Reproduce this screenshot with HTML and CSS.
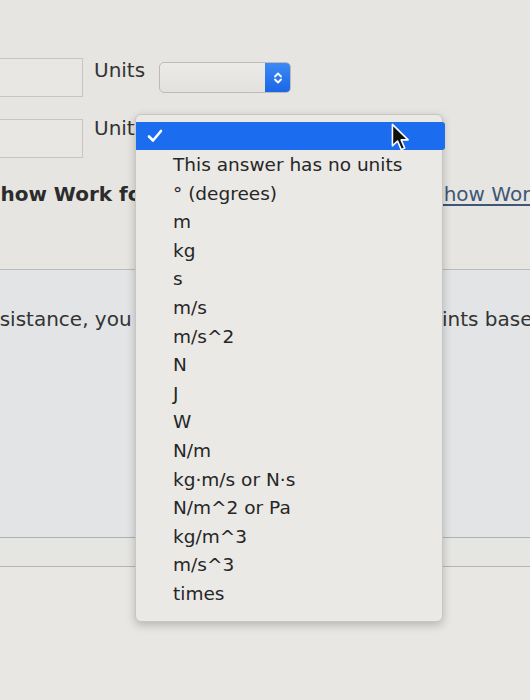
FILE: index.html
```html
<!DOCTYPE html>
<html>
<head>
<meta charset="utf-8">
<link rel="stylesheet" href="styles.css">
</head>
<body>
<div class="page">
  <div class="row row1">
    <div class="field"></div>
    <span class="label">Units</span>
    <div class="select">
      <div class="select-btn">
        <svg width="12" height="16" viewBox="0 0 12 16"><path d="M3 6.5 L6 3.5 L9 6.5 M3 9.5 L6 12.5 L9 9.5" fill="none" stroke="#fff" stroke-width="1.8" stroke-linecap="round" stroke-linejoin="round"/></svg>
      </div>
    </div>
  </div>
  <div class="row row2">
    <div class="field"></div>
    <span class="label label2">Units</span>
  </div>

  <div class="cols work">
    <div class="col-left"><span class="bold shift-work">Show Work for Part 1</span></div>
    <div class="col-right"><a class="link shift-link">Show Work for Part 2</a></div>
  </div>

  <div class="section">
    <div class="cols help">
      <div class="col-left"><span class="shift-help">assistance, you can</span></div>
      <div class="col-right"><span class="shift-points">points based on</span></div>
    </div>
  </div>
  <div class="band"></div>
  <div class="bottom"></div>

  <div class="menu">
    <div class="item selected">
      <svg class="check" width="16" height="14" viewBox="0 0 16 14"><path d="M2 7.5 L6 11.5 L14 2" fill="none" stroke="#fff" stroke-width="2.6" stroke-linecap="round" stroke-linejoin="round"/></svg>
    </div>
    <div class="item">This answer has no units</div>
    <div class="item">° (degrees)</div>
    <div class="item">m</div>
    <div class="item">kg</div>
    <div class="item">s</div>
    <div class="item">m/s</div>
    <div class="item">m/s^2</div>
    <div class="item">N</div>
    <div class="item">J</div>
    <div class="item">W</div>
    <div class="item">N/m</div>
    <div class="item">kg·m/s or N·s</div>
    <div class="item">N/m^2 or Pa</div>
    <div class="item">kg/m^3</div>
    <div class="item">m/s^3</div>
    <div class="item">times</div>
  </div>

  <svg class="cursor" width="20" height="30" viewBox="0 0 14 21"><path d="M1 1 L1 16 L4.6 12.6 L7.2 18.6 L9.6 17.6 L7.1 11.8 L12 11.8 Z" fill="#111" stroke="#fff" stroke-width="1.1" stroke-linejoin="round"/></svg>
</div>
</body>
</html>
```

FILE: styles.css
```css
* { box-sizing: border-box; }
html, body {
  margin: 0;
  padding: 0;
  background: #e6e5e1;
}
body {
  font-family: "DejaVu Sans", Verdana, sans-serif;
  color: #303030;
  overflow: hidden;
}
.page {
  position: relative;
  width: 530px;
  height: 700px;
  overflow: hidden;
  background: #e6e5e1;
}
.row {
  display: flex;
  align-items: flex-start;
  gap: 11px;
}
.row1 { padding-top: 58px; }
.row2 { margin-top: 22px; }
.field {
  width: 120px;
  height: 39px;
  margin-left: -37px;
  border: 1px solid #c6c5c1;
  background: #e8e7e3;
}
.label {
  font-size: 20px;
  line-height: 24px;
  color: #333;
}
.label2 { margin-top: -3px; }
.select {
  margin-left: 3px;
  margin-top: 4px;
  width: 132px;
  height: 31px;
  border: 1px solid #bcbbb7;
  border-radius: 5px;
  background: linear-gradient(#ecebe7, #e2e1dd);
  display: flex;
  justify-content: flex-end;
  overflow: hidden;
}
.select-btn {
  width: 25px;
  height: 100%;
  background: linear-gradient(#3b8af5, #1a66e6);
  display: flex;
  align-items: center;
  justify-content: center;
}
.cols {
  display: grid;
  grid-template-columns: 137px 306px 1fr;
  white-space: nowrap;
  font-size: 20px;
  line-height: 24px;
}
.col-left {
  grid-column: 1;
  overflow: hidden;
}
.col-right {
  grid-column: 3;
  overflow: hidden;
}
.shift-work { display: inline-block; margin-left: -14px; }
.shift-link { display: inline-block; margin-left: -12px; }
.shift-help { display: inline-block; margin-left: -23px; }
.shift-points { display: inline-block; margin-left: -26px; }
.work { margin-top: 24px; }
.bold { font-weight: bold; color: #2c2c2c; }
.link {
  color: #3f5677;
  text-decoration: underline;
  text-underline-offset: 3px;
}
.section {
  margin-top: 63px;
  border-top: 1px solid #b9bcbf;
  background: #e2e4e6;
  height: 268px;
  padding-top: 37px;
}
.section .cols { color: #333; }
.band {
  height: 30px;
  border-top: 1px solid #aeb1b4;
  border-bottom: 1px solid #b3b5b7;
  background: #e5e5e2;
}
.bottom {
  height: 140px;
  background: #e8e7e3;
}
.menu {
  position: absolute;
  left: 135px;
  top: 114px;
  width: 308px;
  height: 508px;
  background: #eae9e5;
  border: 1px solid #c7c6c2;
  border-radius: 6px;
  box-shadow: 0 3px 10px rgba(0,0,0,0.22);
  padding-top: 7px;
  font-family: "DejaVu Sans", Verdana, sans-serif;
  font-size: 18.5px;
}
.item {
  height: 28.6px;
  line-height: 28.6px;
  padding-left: 37px;
  color: #262626;
  white-space: nowrap;
}
.item.selected {
  height: 28px;
  margin-bottom: 1px;
  background: #1c6cf0;
  padding-left: 11px;
  display: flex;
  align-items: center;
  margin-right: -3px;
  border-radius: 0 3px 3px 0;
}
.check { display: block; }
.cursor {
  position: absolute;
  left: 391px;
  top: 123px;
}
```
